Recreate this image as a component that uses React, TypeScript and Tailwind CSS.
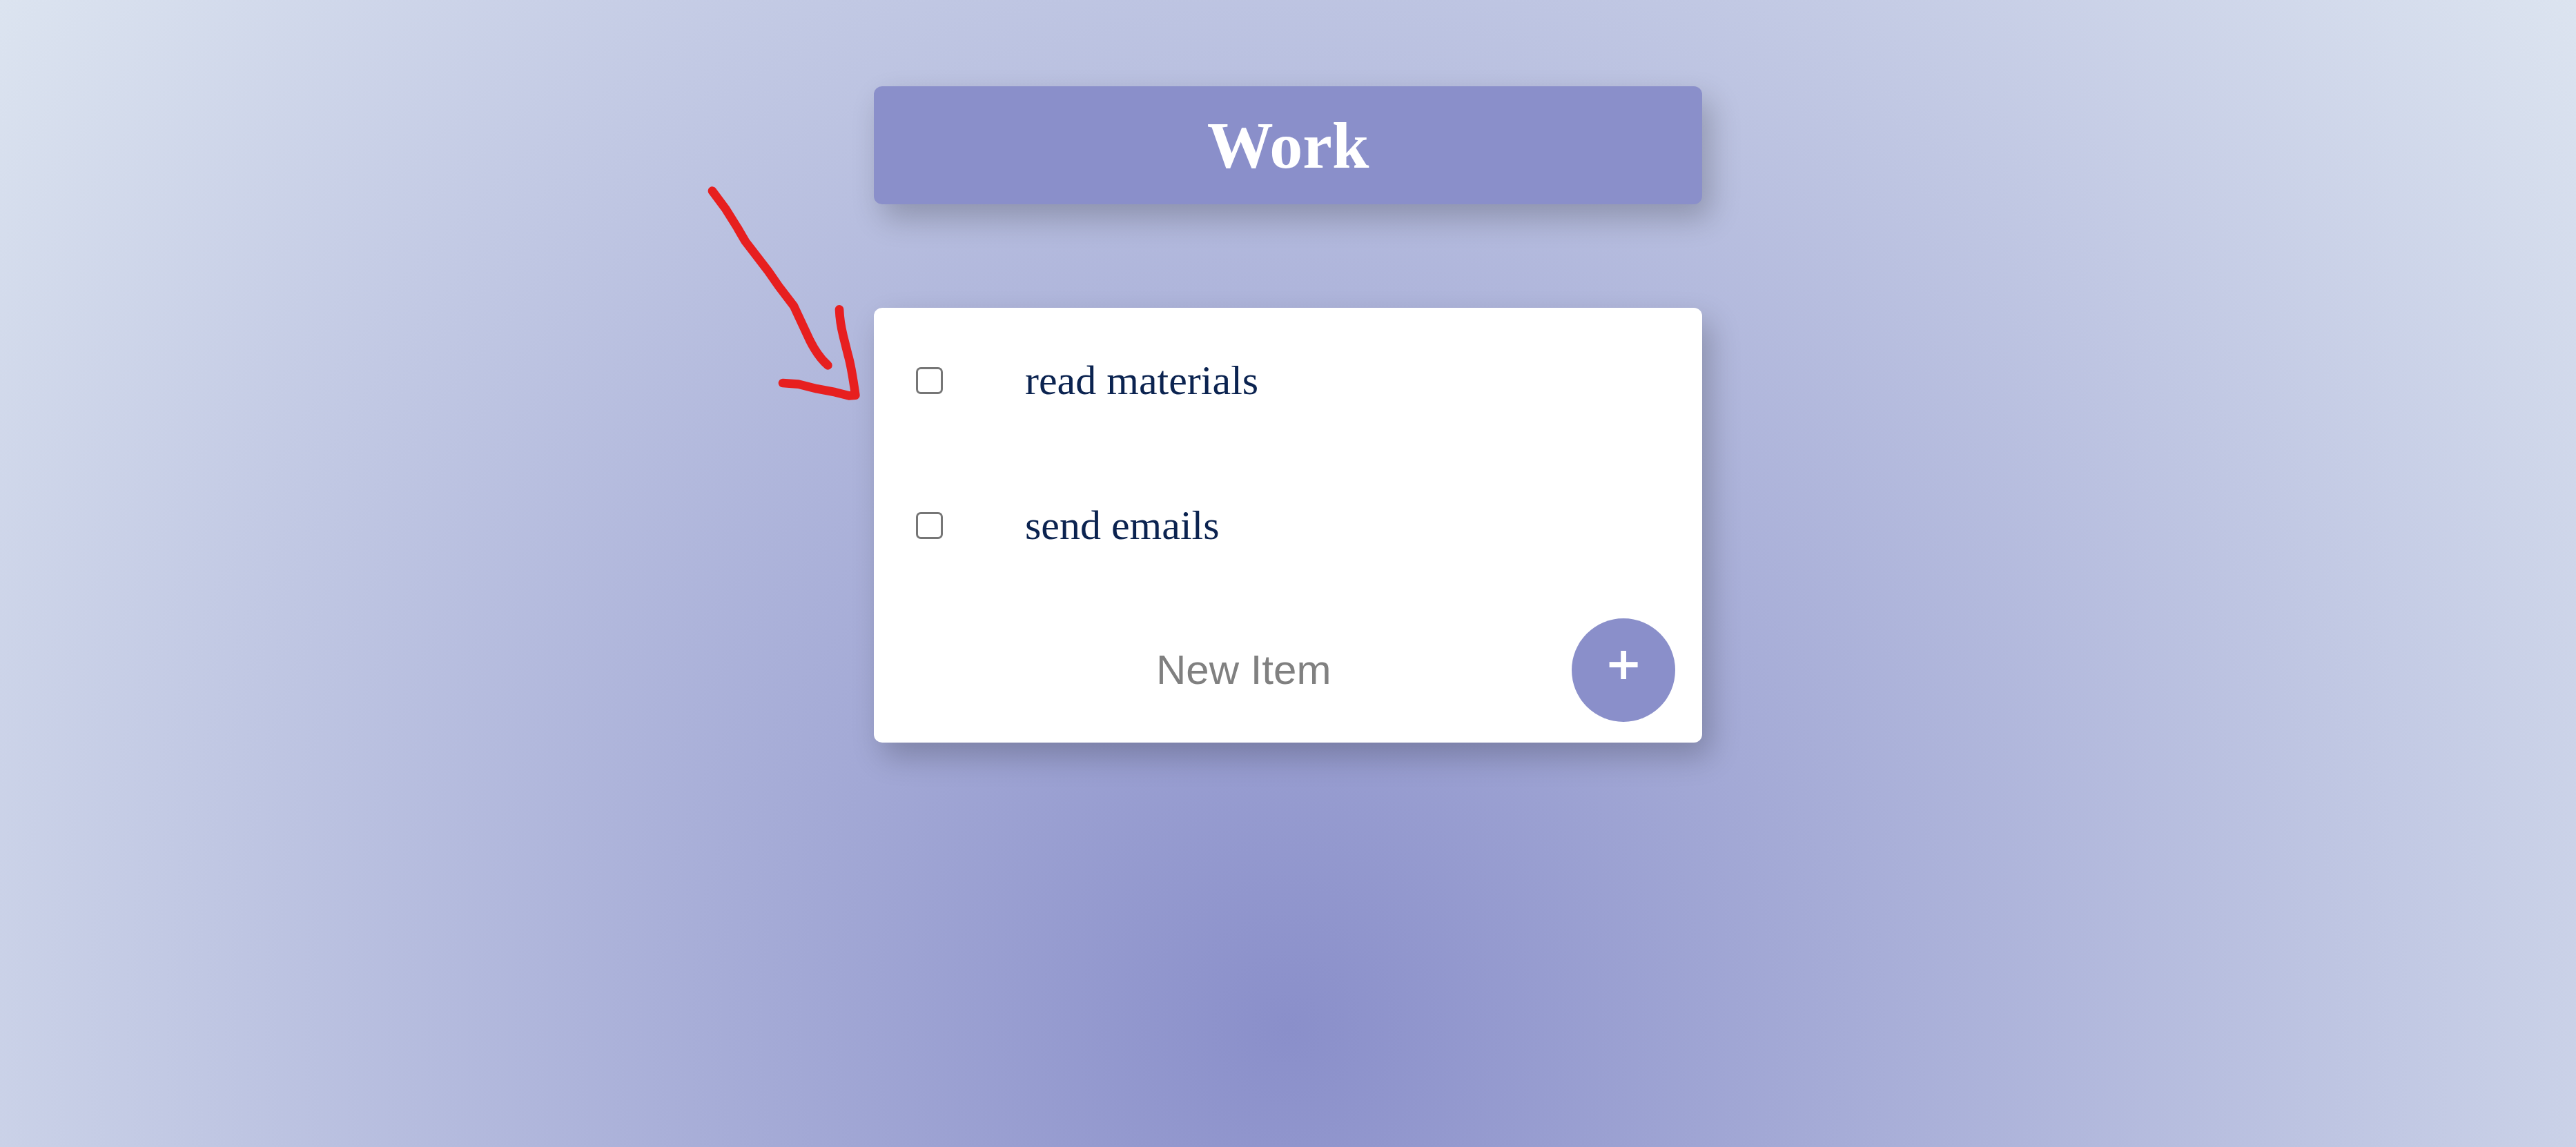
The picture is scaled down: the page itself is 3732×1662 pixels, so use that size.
import { useState } from 'react';

const items = ['read materials', 'send emails'];

const App = () => {
  const [newItem, setNewItem] = useState('');

  return (
    <div className="relative flex h-[1662px] flex-col items-center overflow-hidden bg-[radial-gradient(circle_at_1866px_1490px,#8a8fca_0%,#dce4f0_100%)] pt-[125px]">
      <header className="flex h-[171px] w-[1200px] items-center justify-center rounded-[12px] bg-[#8a8fca] shadow-[12px_20px_44px_rgba(0,0,0,0.22)]">
        <h1 className="font-['Liberation_Serif',serif] text-[96px] font-bold text-white">Work</h1>
      </header>

      <main className="mt-[150px] w-[1200px] rounded-[12px] bg-white shadow-[12px_20px_44px_rgba(0,0,0,0.22)]">
        {items.map(item => (
          <div key={item} className="flex h-[210px] items-center pl-[61px]">
            <input type="checkbox" className="h-[39px] w-[39px] appearance-none rounded-[7px] border-[3px] border-[#767676] bg-white" />
            <p className="ml-[119px] font-['Liberation_Serif',serif] text-[60px] text-[#0b2350]">{item}</p>
          </div>
        ))}
        {/* 입력 + 추가 버튼 */}
        <form className="flex h-[210px] items-start pr-[39px] pt-[30px]">
          <input
            type="text"
            placeholder="New Item"
            value={newItem}
            onChange={e => setNewItem(e.target.value)}
            className="h-[148px] min-w-0 flex-1 bg-transparent pl-[409px] font-['Liberation_Sans',sans-serif] text-[60px] outline-none placeholder:text-[#808080]"
          />
          <button type="button" className="flex h-[150px] w-[150px] shrink-0 items-start justify-center rounded-full bg-[#8a8fca] pt-[17px] font-['Liberation_Sans',sans-serif] text-[80px] leading-[100px] text-white [-webkit-text-stroke:2px_white]">
            +
          </button>
        </form>
      </main>

      {/* 손으로 그린 빨간 화살표 */}
      <svg className="absolute left-[1000px] top-[240px] h-[360px] w-[360px]" viewBox="0 0 1080 1080" fill="none" stroke="#e71f1f" strokeWidth="38" strokeLinecap="round" strokeLinejoin="round">
        <path d="M96 110 L155 190 L205 270 Q225 305 240 330 L340 460 L385 525 L450 610 L520 760 Q555 830 598 868" />
        <path d="M648 625 Q650 680 665 740 L685 820 Q700 870 718 998 L690 1000 L630 985 L550 970 L470 950 L402 945" />
      </svg>
    </div>
  );
};

export default App;
